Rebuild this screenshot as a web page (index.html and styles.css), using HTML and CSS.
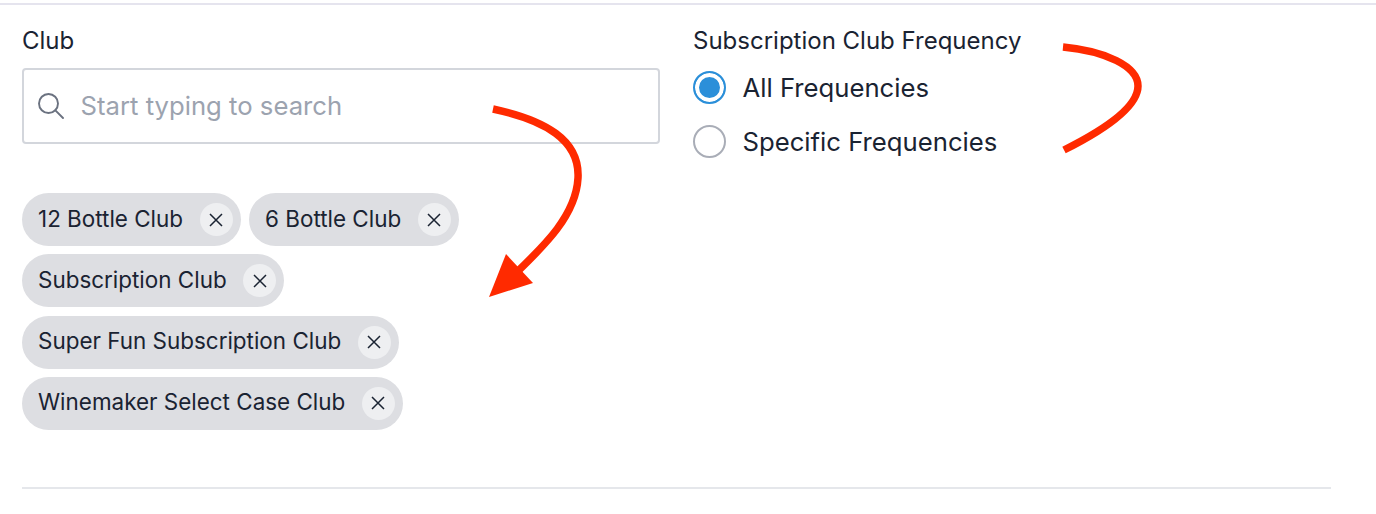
FILE: index.html
```html
<!DOCTYPE html>
<html lang="en">
<head>
    <meta charset="UTF-8">
    <title>Club filter</title>
    <link rel="stylesheet" href="styles.css">
</head>
<body>
    <div class="panel">
        <div class="columns">
            <div class="club-col">
                <div class="field-label">Club</div>
                <div class="search-box">
                    <svg class="search-icon" width="26" height="26" viewBox="0 0 26 26" fill="none" stroke="#6b7280" stroke-width="1.9" stroke-linecap="round"><circle cx="10.5" cy="10.5" r="9.5"/><path d="M17.4 17.4 L25 25"/></svg>
                    <span class="placeholder">Start typing to search</span>
                </div>
                <div class="tags">
                    <div class="tag"><span class="tag-text">12 Bottle Club</span><span class="tag-x"><svg width="14" height="14" viewBox="0 0 14 14" stroke="#1a2332" stroke-width="1.5"><path d="M1 1 L13 13 M13 1 L1 13"/></svg></span></div>
                    <div class="tag"><span class="tag-text">6 Bottle Club</span><span class="tag-x"><svg width="14" height="14" viewBox="0 0 14 14" stroke="#1a2332" stroke-width="1.5"><path d="M1 1 L13 13 M13 1 L1 13"/></svg></span></div>
                    <div class="tag"><span class="tag-text">Subscription Club</span><span class="tag-x"><svg width="14" height="14" viewBox="0 0 14 14" stroke="#1a2332" stroke-width="1.5"><path d="M1 1 L13 13 M13 1 L1 13"/></svg></span></div>
                    <div class="tag"><span class="tag-text">Super Fun Subscription Club</span><span class="tag-x"><svg width="14" height="14" viewBox="0 0 14 14" stroke="#1a2332" stroke-width="1.5"><path d="M1 1 L13 13 M13 1 L1 13"/></svg></span></div>
                    <div class="tag"><span class="tag-text">Winemaker Select Case Club</span><span class="tag-x"><svg width="14" height="14" viewBox="0 0 14 14" stroke="#1a2332" stroke-width="1.5"><path d="M1 1 L13 13 M13 1 L1 13"/></svg></span></div>
                </div>
            </div>
            <div class="freq-col">
                <div class="field-label">Subscription Club Frequency</div>
                <div class="radio-list">
                    <div class="radio-row"><span class="radio radio-on"></span>All Frequencies</div>
                    <div class="radio-row"><span class="radio"></span>Specific Frequencies</div>
                </div>
            </div>
        </div>
        <div class="divider"></div>
    </div>

    <!-- annotation arrows drawn over the screenshot -->
    <svg class="arrows" width="1376" height="514" viewBox="0 0 1376 514" fill="none">
        <path d="M493 109 C545 120 580 140 578 178 C576 215 545 245 516 273" stroke="#ff2a00" stroke-width="7.5"/>
        <path d="M489 297 L506 254 L533 283 Z" fill="#ff2a00"/>
        <path d="M1063 47 C1105 51 1138 66 1138 86 C1138 108 1100 132 1064 150" stroke="#ff2a00" stroke-width="7.5"/>
    </svg>
</body>
</html>
```

FILE: styles.css
```css
body {
    font-family: 'Inter', sans-serif;
    background-color: #fff;
    color: #1a2332;
    margin: 0;
    height: 514px;
    overflow: hidden;
}

.panel {
    border-top: 2px solid #e5e4ee;
    margin-top: 3px;
    padding: 21px 45px 0 22px;
}

.columns {
    display: flex;
    gap: 33px;
    height: 461px;
}

.club-col {
    width: 638px;
}

.field-label {
    font-size: 24px;
    line-height: 30px;
}

.search-box {
    display: flex;
    align-items: center;
    gap: 16.5px;
    height: 76px;
    box-sizing: border-box;
    margin-top: 12px;
    padding-left: 14px;
    border: 2px solid #d3d6dc;
    border-radius: 4px;
}

.placeholder {
    font-size: 25.7px;
    color: #9ca3af;
    margin-bottom: 2px;
}

.tags {
    display: flex;
    flex-wrap: wrap;
    gap: 8.3px 8.5px;
    margin-top: 49px;
    width: 470px;
}

.tag {
    display: flex;
    align-items: center;
    height: 53px;
    padding: 0 8px 0 16px;
    gap: 16.5px;
    background-color: #dddee2;
    border-radius: 27px;
    font-size: 22.45px;
    white-space: nowrap;
}

.tag-text {
    margin-bottom: 3px;
}

.tag-x {
    display: flex;
    align-items: center;
    justify-content: center;
    width: 33px;
    height: 33px;
    border-radius: 50%;
    background-color: #eeeff1;
}

.freq-col {
    flex: 1;
}

.radio-list {
    margin-top: 4px;
}

.radio-row {
    display: flex;
    align-items: center;
    gap: 16.5px;
    height: 54px;
    font-size: 25.7px;
}

.radio {
    width: 33px;
    height: 33px;
    box-sizing: border-box;
    border: 2px solid #a9adb7;
    border-radius: 50%;
    background-color: #fff;
}

.radio-on {
    border-color: #2b8fd9;
    background-color: #2b8fd9;
    box-shadow: inset 0 0 0 4px #fff;
}

.divider {
    border-top: 2px solid #e5e7eb;
}

.arrows {
    position: absolute;
    top: 0;
    left: 0;
}
```
